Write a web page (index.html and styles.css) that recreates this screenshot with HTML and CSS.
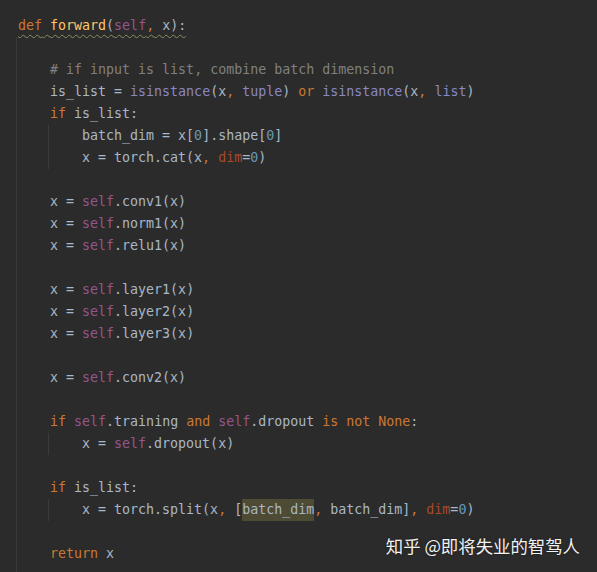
FILE: index.html
```html
<!DOCTYPE html>
<html lang="zh">
<head>
<meta charset="utf-8">
<title>forward</title>
<link rel="stylesheet" href="styles.css">
</head>
<body>
<div class="editor">
  <div class="ln"><span class="warn"><span class="kw">def</span> <span class="fn">forward</span>(<span class="self">self</span><span class="kw">,</span> x):</span></div>
  <div class="body">
    <div class="ln"> </div>
    <div class="ln">    <span class="cm"># if input is list, combine batch dimension</span></div>
    <div class="ln">    is_list = <span class="bi">isinstance</span>(x<span class="kw">,</span> <span class="bi">tuple</span>) <span class="kw">or</span> <span class="bi">isinstance</span>(x<span class="kw">,</span> <span class="bi">list</span>)</div>
    <div class="ln">    <span class="kw">if</span> is_list:</div>
    <div class="blk">
      <div class="ln">    batch_dim = x[<span class="num">0</span>].shape[<span class="num">0</span>]</div>
      <div class="ln">    x = torch.cat(x<span class="kw">,</span> <span class="arg">dim</span>=<span class="num">0</span>)</div>
    </div>
    <div class="ln"> </div>
    <div class="ln">    x = <span class="self">self</span>.conv1(x)</div>
    <div class="ln">    x = <span class="self">self</span>.norm1(x)</div>
    <div class="ln">    x = <span class="self">self</span>.relu1(x)</div>
    <div class="ln"> </div>
    <div class="ln">    x = <span class="self">self</span>.layer1(x)</div>
    <div class="ln">    x = <span class="self">self</span>.layer2(x)</div>
    <div class="ln">    x = <span class="self">self</span>.layer3(x)</div>
    <div class="ln"> </div>
    <div class="ln">    x = <span class="self">self</span>.conv2(x)</div>
    <div class="ln"> </div>
    <div class="ln">    <span class="kw">if</span> <span class="self">self</span>.training <span class="kw">and</span> <span class="self">self</span>.dropout <span class="kw">is not None</span>:</div>
    <div class="blk">
      <div class="ln">    x = <span class="self">self</span>.dropout(x)</div>
    </div>
    <div class="ln"> </div>
    <div class="ln">    <span class="kw">if</span> is_list:</div>
    <div class="blk">
      <div class="ln">    x = torch.split(x<span class="kw">,</span> [<span class="hl">batch_dim</span><span class="kw">,</span> batch_dim]<span class="kw">,</span> <span class="arg">dim</span>=<span class="num">0</span>)</div>
    </div>
    <div class="ln"> </div>
    <div class="ln">    <span class="kw">return</span> x</div>
  </div>
</div>
<div class="mark">知乎 @即将失业的智驾人</div>
</body>
</html>
```

FILE: styles.css
```css
html, body {
  margin: 0;
  padding: 0;
  background: #2b2b2b;
  height: 100%;
  overflow: hidden;
}

.editor {
  padding: 14.5px 0 0 18px;
  font-family: "DejaVu Sans Mono", "Liberation Mono", monospace;
  font-size: 13.3px;
  color: #a9b7c6;
}

.ln {
  height: 22px;
  line-height: 22px;
  white-space: pre;
}

.body {
  margin-left: -2px;
  padding-left: 1px;
  border-left: 1px solid #393939;
  padding-bottom: 12px;
}

.blk {
  margin-left: 30px;
  padding-left: 1px;
  border-left: 1px solid #3b3b3b;
}

.kw { color: #cc7832; }
.fn { color: #ffc66d; }
.self { color: #94558d; }
.cm { color: #808080; }
.num { color: #6897bb; }
.arg { color: #aa4926; }
.bi { color: #8888c6; }

.hl {
  background: #4d4b33;
  display: inline-block;
  height: 22px;
}

.warn {
  text-decoration-line: underline;
  text-decoration-style: wavy;
  text-decoration-color: #8c8c60;
  text-decoration-thickness: 1px;
  text-underline-offset: 4px;
}

.mark {
  position: absolute;
  right: 17px;
  bottom: 14px;
  font-family: "Noto Sans CJK SC", "Noto Sans", sans-serif;
  font-size: 17.4px;
  color: #f2f2f2;
  text-shadow: 0 0 2px rgba(0,0,0,0.5);
}
```
